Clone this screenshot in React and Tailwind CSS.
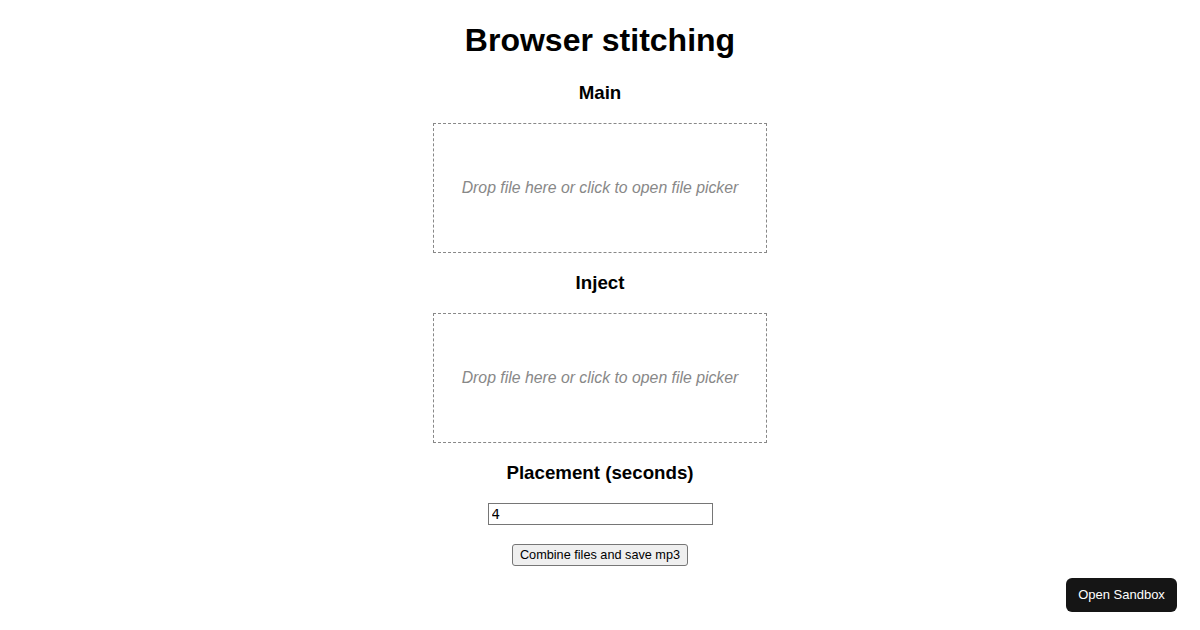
import React from "react";

function DropZone() {
    return (
        <div className="w-[334px] h-[130px] border border-dashed border-[#888] flex items-center justify-center cursor-pointer">
            <p className="italic text-[15.8px] text-[#888]">
                Drop file here or click to open file picker
            </p>
        </div>
    );
}

export default function App() {
    return (
        <div
            className="w-full min-h-[630px] bg-white text-black flex flex-col items-center"
            style={{ fontFamily: '"Liberation Sans", Arial, sans-serif' }}
        >
            <h1 className="mt-[22px] text-[32px] leading-[37px] font-bold">
                Browser stitching
            </h1>

            <h3 className="mt-[23px] text-[18.72px] leading-[22px] font-bold">
                Main
            </h3>
            <div className="mt-[19px]">
                <DropZone />
            </div>

            <h3 className="mt-[19px] text-[18.72px] leading-[22px] font-bold">
                Inject
            </h3>
            <div className="mt-[19px]">
                <DropZone />
            </div>

            <h3 className="mt-[19px] text-[18.72px] leading-[22px] font-bold">
                Placement (seconds)
            </h3>

            <input
                type="text"
                defaultValue="4"
                className="mt-[19px] w-[225px] h-[22px] border border-[#767676] px-[3px] text-[13.33px] text-black bg-white"
                style={{ fontFamily: '"DejaVu Sans", sans-serif' }}
            />

            <button className="mt-[19px] w-[176px] h-[22px] border border-[#767676] rounded-[3px] bg-[#efefef] text-[12.7px] leading-none">
                Combine files and save mp3
            </button>

            <button className="fixed right-[23px] bottom-[18px] w-[111px] h-[34px] rounded-md bg-[#151515] text-white text-[13px]">
                Open Sandbox
            </button>
        </div>
    );
}
